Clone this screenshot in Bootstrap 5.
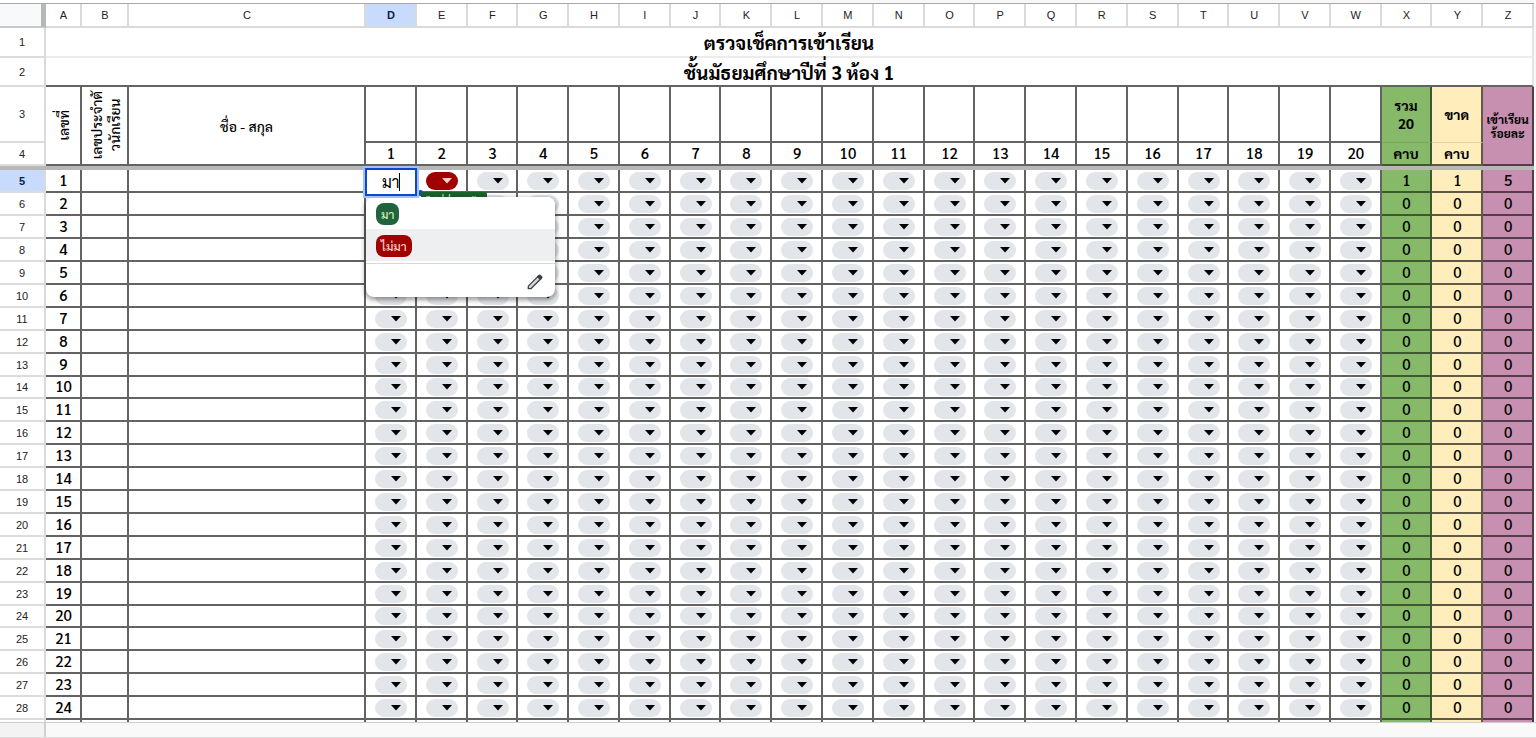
<!DOCTYPE html>
<html lang="th">
<head>
<meta charset="utf-8">
<title>ตรวจเช็คการเข้าเรียน</title>
<meta name="viewport" content="width=device-width, initial-scale=1">
<link href="https://cdn.jsdelivr.net/npm/bootstrap@5.3.0/dist/css/bootstrap.min.css" rel="stylesheet">
<style>
  body { font-family: "Sarabun", "Noto Sans Thai Looped", "Noto Sans", sans-serif; color: #000; background: #fff; }
  .sheet-wrap { padding: 3px 2px 0 0; background: linear-gradient(to right, #fff 50%, #f8f8f8 50%); }
  .sheet { table-layout: fixed; width: 100%; border-collapse: separate; border-spacing: 0; border-top: 1px solid #a8a8a8; background: #fff; }
  .sheet th, .sheet td { padding: 0; text-align: center; vertical-align: middle; font-weight: 500; }
  .w-num { width: 46px; } .w-a { width: 36px; } .w-b { width: 47px; } .w-c { width: 237px; }
  .sheet .letter { height: 24px; padding-left: 1px; font: 400 11px/16px "Liberation Sans", sans-serif; color: #222; border-right: 2px solid #dadada; border-bottom: 2px solid #dadada; }
  .sheet .corner { background: #f8f9fa; border-right: 5px solid #b7b7b7; border-bottom-color: #c8c8c8; }
  .sheet .rownum { font: 400 11px/12px "Liberation Sans", sans-serif; color: #222; border-right: 2px solid #dadada; border-bottom: 2px solid #dcdcdc; }
  .sheet .picked { background: #c9dbfd; color: #0a1f4b; font-weight: 700; }
  .sheet .cell { border-right: 2px solid #636363; border-bottom: 2px solid #636363; font-size: 14px; line-height: 16px; }
  .sheet .figure-cell { padding: 0 0 2px 1px; font-size: 15px; }
  .sheet .title-cell { font-size: 19px; font-weight: 700; line-height: 26px; border-bottom: 2px solid #ececec; border-right: 2px solid #e4e4e4; }
  .sheet .title-last { border-bottom-color: #636363; }
  .h-one { height: 30px; } .h-two { height: 29px; }
  .sheet .green { background: #86ba68; border-color: #3f5831; } .sheet .cream { background: #ffedbb; border-color: #5f5945; } .sheet .mauve { background: #c790b0; border-color: #543c4a; }
  .sheet .bold-head { padding-bottom: 2px; font-weight: 700; line-height: 18px; }
  .sheet .soft-base { border-bottom: 1px solid #0000001a; }
  .sheet .small-head { font-size: 12px; font-weight: 700; line-height: 14px; white-space: nowrap; }
  .h-three { height: 56px; } .h-four { height: 23px; } .h-row { height: 23px; }
  .h-row:nth-child(10n) { height: 22px; }
  .freeze td { height: 4px; background: #b7b7b7; }
  .sliver { height: 2px; }
  .sheet .sliver .cell { border-bottom: 0; }
  .turned { writing-mode: vertical-rl; transform: rotate(180deg); display: inline-block; vertical-align: middle; font-size: 14px; line-height: 18px; white-space: nowrap; }
  .chip { display: block; appearance: none; width: 32px; height: 18px; margin-left: 9px; padding: 0; border: 0; border-radius: 9px;
    background: #e2e5ea url("data:image/svg+xml,%3Csvg xmlns='http://www.w3.org/2000/svg' width='10' height='6'%3E%3Cpath d='M0 0h10L5 5.5z'/%3E%3C/svg%3E") no-repeat 16px 6px; }
  .chip-absent { background: #a00000 url("data:image/svg+xml,%3Csvg xmlns='http://www.w3.org/2000/svg' width='10' height='6'%3E%3Cpath d='M0 0h10L5 5.5z' fill='%23ffcfc9'/%3E%3C/svg%3E") no-repeat 16px 6px; }
  .editor { top: -2px; left: -1px; right: -2px; height: 28px; z-index: 4; border: 2px solid #0b49cf; outline: 2px solid #a3c0f7; background: #fff; }
  .editor input { width: 17px; padding: 0; border: 0; outline: 0; font-size: 16px; line-height: 20px; background: none; }
  .caret { width: 1px; height: 18px; background: #000; }
  .hint { top: 22px; left: 55px; width: 66px; height: 20px; z-index: 2; background: #186329; color: #fff; font-size: 10px; line-height: 20px; border-radius: 2px; }
  .handle { top: 20px; left: 52px; width: 5px; height: 6px; z-index: 2; border-radius: 3px; background: #0b49cf; }
  .menu { top: 27px; left: 0; width: 189px; height: 100px; z-index: 3; background: #fff; border-radius: 8px; box-shadow: 0 2px 5px 1px #00000066; overflow: hidden; }
  .option { height: 32px; padding: 2px 10px 0; border: 0; background: #fff; display: flex; align-items: center; }
  .option.hot { background: #eeeff1; }
  .tag { height: 22px; padding: 0 5px; border-radius: 8px; font-size: 12px; font-weight: 500; line-height: 22px; }
  .tag-in { background: #20643b; color: #d4edbc; } .tag-out { background: #a00000; color: #ffcfc9; }
  .menu-foot { border-top: 1px solid #d5d9de; margin-top: 2px; height: 34px; padding-right: 12px; }
  .bottom-bar { height: 16px; border-top: 1px solid #cfcfcf; border-bottom: 1px solid #dedede; background: #f9f9f9; }
  .bottom-bar div { width: 46px; background: #f3f3f3; border-right: 2px solid #cfcfcf; }
</style>
</head>
<body>
<div class="sheet-wrap">
  <table class="sheet">
    <colgroup id="cols"><col class="w-num"><col class="w-a"><col class="w-b"><col class="w-c"></colgroup>
    <thead>
      <tr id="letters"><th class="letter corner"></th></tr>
      <tr class="h-one"><th class="rownum">1</th><th class="title-cell" colspan="26">ตรวจเช็คการเข้าเรียน</th></tr>
      <tr class="h-two"><th class="rownum">2</th><th class="title-cell title-last" colspan="26">ชั้นมัธยมศึกษาปีที่ 3 ห้อง 1</th></tr>
      <tr class="h-three" id="row3">
        <th class="rownum">3</th>
        <th class="cell" rowspan="2"><span class="turned">เลขที่</span></th>
        <th class="cell" rowspan="2"><span class="turned">เลขประจำตั<br>วนักเรียน</span></th>
        <th class="cell" rowspan="2">ชื่อ - สกุล</th>
      </tr>
      <tr class="h-four" id="row4"><th class="rownum">4</th></tr>
      <tr class="freeze"><td colspan="27"></td></tr>
    </thead>
    <tbody id="rows"></tbody>
  </table>
</div>
<div class="bottom-bar d-flex"><div></div></div>

<template id="active-cell">
  <div class="editor position-absolute d-flex align-items-center justify-content-center">
    <input type="text" value="มา" aria-label="ค่าในเซลล์ D5"><span class="caret"></span>
  </div>
  <span class="handle position-absolute"></span>
  <div class="hint position-absolute">ไม่ที่นี่ มาแล้ว</div>
  <div class="menu position-absolute">
    <button type="button" class="option w-100"><span class="tag tag-in">มา</span></button>
    <button type="button" class="option hot w-100"><span class="tag tag-out">ไม่มา</span></button>
    <div class="menu-foot d-flex align-items-center justify-content-end">
      <button type="button" class="btn p-0 border-0 lh-1" aria-label="แก้ไข">
        <svg width="16" height="16" viewBox="0 0 16 16" fill="#d4d6d8" stroke="#3c4043" stroke-width="1.3" stroke-linejoin="round"><path d="M1.300 14.700v-2.600L11.300 2.100l2.600 2.600L3.900 14.700z"/><path d="M10.600 2.800l1.300-1.300c.4-.4.9-.4 1.300 0l1.300 1.300c.4.4.4.9 0 1.300l-1.300 1.300z" fill="#3c4043"/></svg>
      </button>
    </div>
  </div>
</template>

<script>
  const byId = id => document.getElementById(id);
  const letters = 'ABCDEFGHIJKLMNOPQRSTUVWXYZ'.split('');
  byId('cols').innerHTML += '<col>'.repeat(23);
  byId('letters').innerHTML += letters.map(l => `<th class="letter${l === 'D' ? ' picked' : ''}">${l}</th>`).join('');
  const days = Array.from({ length: 20 }, (_, i) => i + 1);
  byId('row3').innerHTML += days.map(() => '<th class="cell"></th>').join('') +
    '<th class="cell green bold-head soft-base">รวม<br>20</th><th class="cell cream bold-head soft-base">ขาด</th>' +
    '<th class="cell mauve small-head" rowspan="2">เข้าเรียน<br>ร้อยละ</th>';
  byId('row4').innerHTML += days.map(d => `<th class="cell figure-cell">${d}</th>`).join('') +
    '<th class="cell green bold-head">คาบ</th><th class="cell cream bold-head">คาบ</th>';

  const chip = (n, d) => {
    const absent = n === 1 && d === 2;
    return `<select class="chip${absent ? ' chip-absent' : ''}" aria-label="นักเรียน ${n} คาบ ${d}"><option></option><option>มา</option><option>ไม่มา</option></select>`;
  };
  let html = '';
  for (let n = 1; n <= 24; n++) {
    html += `<tr class="h-row"><th class="rownum${n === 1 ? ' picked' : ''}">${n + 4}</th><td class="cell figure-cell">${n}</td><td class="cell"></td><td class="cell"></td>`;
    html += days.map(d => n === 1 && d === 1
      ? `<td class="cell position-relative">${byId('active-cell').innerHTML}</td>`
      : `<td class="cell">${chip(n, d)}</td>`).join('');
    const sums = n === 1 ? [1, 1, 5] : [0, 0, 0];
    html += ['green', 'cream', 'mauve'].map((c, i) => `<td class="cell figure-cell ${c}">${sums[i]}</td>`).join('') + '</tr>';
  }
  html += '<tr class="sliver"><th class="rownum border-bottom-0"></th>' + letters.map(l =>
    `<td class="cell${{ X: ' green', Y: ' cream', Z: ' mauve' }[l] || ''}"></td>`).join('') + '</tr>';
  byId('rows').innerHTML = html;
</script>
<script src="https://cdn.jsdelivr.net/npm/bootstrap@5.3.0/dist/js/bootstrap.bundle.min.js"></script>
</body>
</html>
